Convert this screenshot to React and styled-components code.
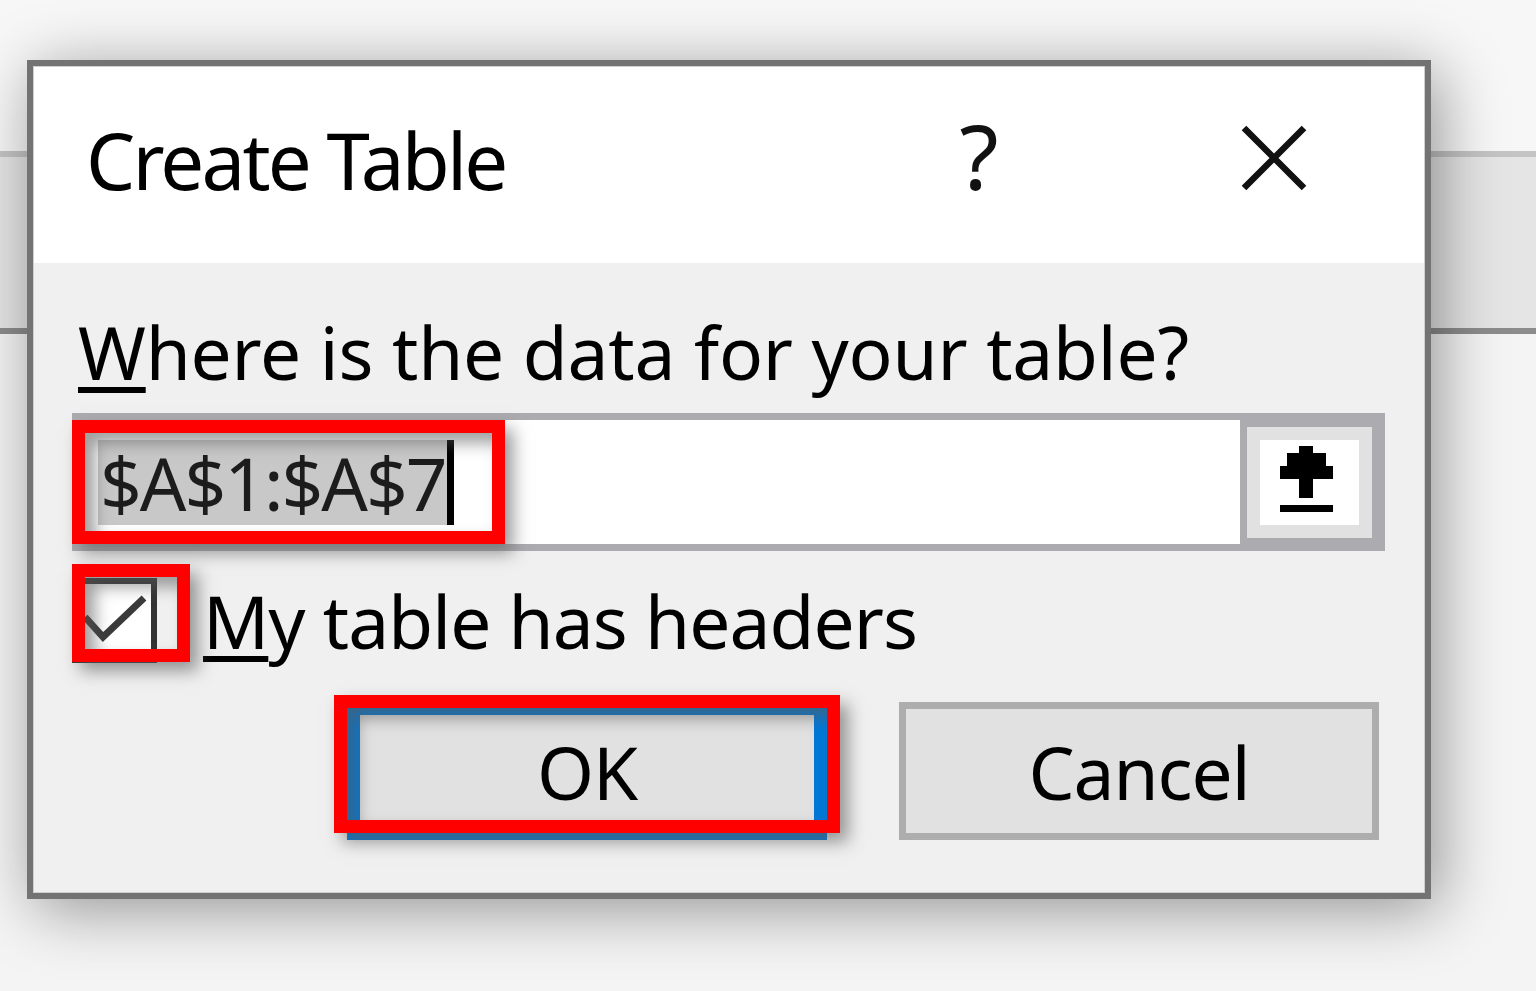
import React from "react";
import styled, { createGlobalStyle } from "styled-components";

const GlobalStyle = createGlobalStyle`
  html, body { margin: 0; padding: 0; }
  body {
    background: #f6f6f6;
    font-family: "Noto Sans", "Open Sans", sans-serif;
  }
`;

const Page = styled.div`
  position: relative;
  width: 1536px;
  height: 991px;
  overflow: hidden;
  background: #f6f6f6;
`;

const Sheet = styled.div`
  display: flex;
  flex-direction: column;
  height: 100%;
`;

const Band = styled.div`
  height: ${(p) => (p.$h ? `${p.$h}px` : "auto")};
  flex: ${(p) => (p.$grow ? 1 : "none")};
  background: ${(p) => p.$bg};
`;

const GridLine = styled.div`
  height: 6px;
  background: ${(p) => p.$color};
`;

const Dialog = styled.div`
  position: absolute;
  left: 27px;
  top: 60px;
  width: 1404px;
  box-sizing: border-box;
  border: 6px solid #737373;
  padding: 1px;
  background: #cfcfcf;
  box-shadow: 8px 10px 60px rgba(0, 0, 0, 0.4);
  display: flex;
  flex-direction: column;
`;

const TitleBar = styled.header`
  display: flex;
  align-items: flex-start;
  height: 196px;
  box-sizing: border-box;
  background: #ffffff;
  padding: 0 85px 0 52px;
`;

const Title = styled.h1`
  flex: 1;
  margin: 54px 0 0;
  font-size: 78px;
  line-height: 78px;
  font-weight: 400;
  letter-spacing: -2.8px;
  color: #000;
`;

const HelpGlyph = styled.div`
  width: 130px;
  margin-top: 43px;
  text-align: center;
  font-size: 90px;
  line-height: 90px;
  color: #111;
`;

const CloseButton = styled.div`
  width: 130px;
  margin-left: 165px;
  margin-top: 58px;
  display: flex;
  justify-content: center;
`;

const Body = styled.div`
  background: #f0f0f0;
  padding: 52px 39px 52px 38px;
  display: flex;
  flex-direction: column;
`;

const Label = styled.label`
  display: block;
  margin-left: 6px;
  font-size: 73px;
  line-height: 73px;
  letter-spacing: -0.2px;
  color: #000;
`;

const Accel = styled.span`
  text-decoration: underline;
  text-decoration-thickness: 6px;
  text-underline-offset: 7px;
`;

const InputGroup = styled.div`
  position: relative;
  margin-top: 25px;
  display: flex;
  height: 138px;
  box-sizing: border-box;
  border: 7px solid #acacb0;
`;

const TextField = styled.div`
  flex: 1;
  background: #ffffff;
  display: flex;
  align-items: center;
  padding-left: 19px;
`;

const Selection = styled.span`
  display: block;
  height: 85px;
  line-height: 85px;
  padding: 0 2px;
  background: #c8c8c8;
  font-size: 73px;
  letter-spacing: -2px;
  color: #1c1c1c;
  white-space: nowrap;
`;

const Caret = styled.span`
  display: block;
  width: 7px;
  height: 85px;
  background: #000;
`;

const RefButton = styled.div`
  width: 138px;
  box-sizing: border-box;
  background: #acacb0;
  padding: 7px 6px 6px 7px;
  display: flex;
`;

const RefFace = styled.div`
  flex: 1;
  background: #e1e1e1;
  padding: 13px;
  display: flex;
`;

const RefIcon = styled.div`
  flex: 1;
  background: #ffffff;
  display: flex;
`;

const CheckRow = styled.div`
  margin-top: 27px;
  height: 85px;
  display: flex;
  align-items: center;
  gap: 46px;
`;

const CheckWrap = styled.div`
  position: relative;
  width: 85px;
  height: 85px;
`;

const CheckBox = styled.div`
  width: 85px;
  height: 85px;
  box-sizing: border-box;
  border: 6px solid #333333;
  background: #ffffff;
  display: flex;
`;

const CheckLabel = styled.span`
  font-size: 73px;
  line-height: 73px;
  letter-spacing: -0.9px;
  color: #000;
  white-space: nowrap;
`;

const ButtonRow = styled.div`
  margin-top: 39px;
  padding-right: 6px;
  display: flex;
  justify-content: flex-end;
  gap: 72px;
`;

const ButtonWrap = styled.div`
  position: relative;
`;

const Button = styled.button`
  width: 480px;
  height: 138px;
  box-sizing: border-box;
  padding: 0;
  margin: 0;
  border: ${(p) => (p.$primary ? "13px solid #0078d7" : "7px solid #adadad")};
  background: #e1e1e1;
  font-family: "Noto Sans", "Open Sans", sans-serif;
  font-size: 73px;
  line-height: 73px;
  letter-spacing: -1px;
  color: #000;
  display: flex;
  align-items: center;
  justify-content: center;
`;

const Frame = styled.div`
  position: absolute;
  pointer-events: none;
  box-sizing: border-box;
  top: ${(p) => p.$top}px;
  left: ${(p) => p.$left}px;
  width: ${(p) => p.$w}px;
  height: ${(p) => p.$h}px;
  border: 13px solid #ff0000;
  box-shadow: 8px 9px 16px rgba(90, 90, 90, 0.62),
    inset 10px 10px 16px rgba(90, 90, 90, 0.58);
`;

const CloseIcon = () => (
  <svg width="66" height="66" viewBox="0 0 66 66">
    <path d="M3 3L63 63M63 3L3 63" stroke="#111" strokeWidth="6.5" fill="none" />
  </svg>
);

const UploadArrow = () => (
  <svg width="99" height="85" viewBox="0 0 99 85">
    <path
      d="M39 6H53V13H66V26H73V39H53V58H39V39H20V26H27V13H39Z"
      fill="#000"
    />
    <rect x="20" y="65" width="53" height="7" fill="#000" />
  </svg>
);

const CheckMark = () => (
  <svg width="73" height="73" viewBox="0 0 73 73">
    <path
      d="M7 33L25 53L66 14"
      stroke="#3a3a3a"
      strokeWidth="7"
      fill="none"
      strokeLinejoin="miter"
    />
  </svg>
);

export default function App() {
  return (
    <Page>
      <GlobalStyle />
      <Sheet>
        <Band $h={151} $bg="#f7f7f7" />
        <GridLine $color="#c4c4c4" />
        <Band $h={171} $bg="#e5e5e5" />
        <GridLine $color="#8c8c8c" />
        <Band $grow $bg="#f4f4f4" />
      </Sheet>

      <Dialog role="dialog" aria-label="Create Table">
        <TitleBar>
          <Title>Create Table</Title>
          <HelpGlyph>?</HelpGlyph>
          <CloseButton>
            <CloseIcon />
          </CloseButton>
        </TitleBar>

        <Body>
          <Label>
            <Accel>W</Accel>here is the data for your table?
          </Label>

          <InputGroup>
            <TextField>
              <Selection>$A$1:$A$7</Selection>
              <Caret />
            </TextField>
            <RefButton>
              <RefFace>
                <RefIcon>
                  <UploadArrow />
                </RefIcon>
              </RefFace>
            </RefButton>
            <Frame $top={0} $left={-7} $w={433} $h={124} />
          </InputGroup>

          <CheckRow>
            <CheckWrap>
              <CheckBox>
                <CheckMark />
              </CheckBox>
              <Frame $top={-14} $left={0} $w={118} $h={98} />
            </CheckWrap>
            <CheckLabel>
              <Accel>M</Accel>y table has headers
            </CheckLabel>
          </CheckRow>

          <ButtonRow>
            <ButtonWrap>
              <Button $primary>OK</Button>
              <Frame $top={-7} $left={-13} $w={506} $h={138} />
            </ButtonWrap>
            <ButtonWrap>
              <Button>Cancel</Button>
            </ButtonWrap>
          </ButtonRow>
        </Body>
      </Dialog>
    </Page>
  );
}
